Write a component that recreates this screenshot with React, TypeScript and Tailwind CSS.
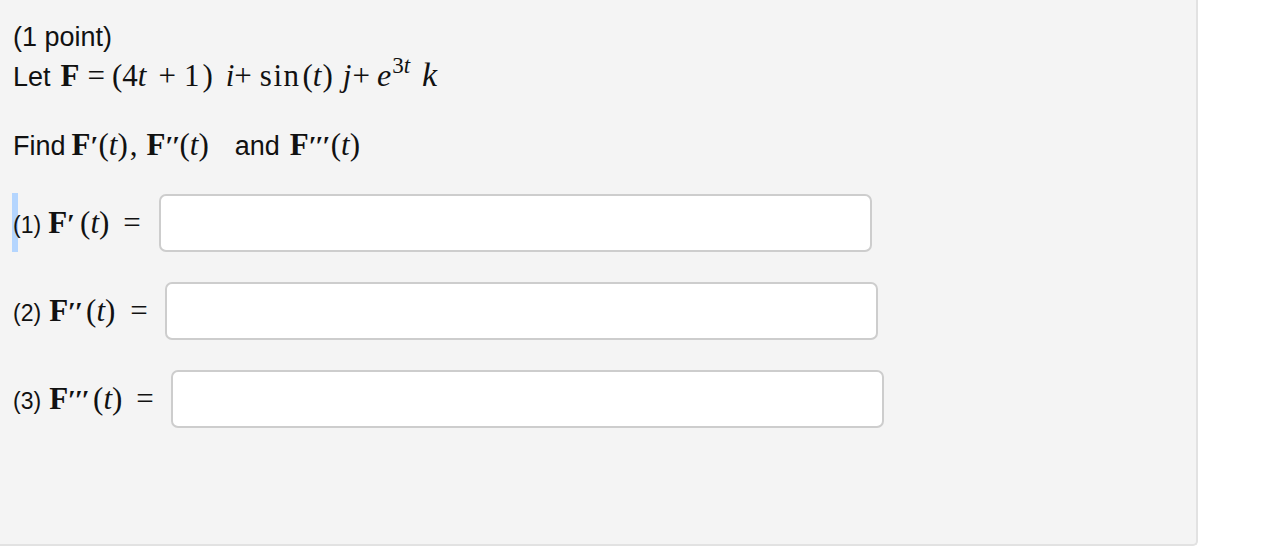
import React from "react";

const sans = "font-['Liberation_Sans',Arial,sans-serif]";
const serif = "font-['Liberation_Serif','Times_New_Roman',serif]";

// bold F with primes, then (t)
const Deriv = ({ count, pw }: { count: number; pw: string }) => (
  <span className={`${serif} text-[31px] leading-[30px]`}>
    <span className="font-bold">F</span>
    <span className={`inline-block ${pw} text-[28px] font-bold tracking-[-1px]`}>
      {"′".repeat(count)}
    </span>
    <span>(</span>
    <span className="italic">t</span>
    <span>)</span>
  </span>
);

const rows = [
  { n: "1", count: 1, pw: "w-[13px]", fm: "ml-[7px]", em: "ml-[14px]", bm: "ml-[18px]" },
  { n: "2", count: 2, pw: "w-[18px]", fm: "ml-[8px]", em: "ml-[15px]", bm: "ml-[17px]" },
  { n: "3", count: 3, pw: "w-[25px]", fm: "ml-[8px]", em: "ml-[14px]", bm: "ml-[17px]" },
];

export default function App() {
  return (
    <div className="w-[1280px] h-[552px] bg-white">
      <div className="w-[1198px] h-[546px] bg-[#f4f4f4] border-r-2 border-b-2 border-[#e2e2e2] rounded-br-[5px] pl-[13px] pt-[22px] text-[#111]">
        <div className={`${sans} text-[27px] leading-[30px]`}>(1 point)</div>
        <div className={`${sans} text-[27px] leading-[30px] mt-[8px]`}>
          <span>Let</span>
          <span className={`${serif} text-[31px] leading-[30px]`}>
            <span className="font-bold ml-[10px]">F</span>
            <span className="ml-[8px]">=</span>
            <span className="ml-[7px]">(4</span>
            <span className="italic">t</span>
            <span className="ml-[12px]">+</span>
            <span className="ml-[8px]">1</span>
            <span className="ml-[3px]">)</span>
            <span className="italic ml-[13px]">i</span>
            <span>+</span>
            <span className="ml-[8px] tracking-[1.5px]">sin</span>
            <span className="ml-[2px]">(</span>
            <span className="italic">t</span>
            <span className="ml-[1px]">)</span>
            <span className="italic ml-[10px]">j</span>
            <span className="ml-[1px]">+</span>
            <span className="italic ml-[7px] text-[32px]">e</span>
            <sup className="text-[23px] -top-[13px] ml-[1px]">
              3<span className="italic">t</span>
            </sup>
            <span className="italic ml-[12px] text-[34px]">k</span>
          </span>
        </div>
        <div className={`${sans} text-[27px] leading-[30px] mt-[38px]`}>
          <span>Find</span>
          <span className="ml-[6px]"><Deriv count={1} pw="w-[8px]" /></span>
          <span className={`${serif} text-[31px] leading-[30px] ml-[2px]`}>,</span>
          <span className="ml-[9px]"><Deriv count={2} pw="w-[14px]" /></span>
          <span className="ml-[26px]">and</span>
          <span className="ml-[10px]"><Deriv count={3} pw="w-[22px]" /></span>
        </div>
        <div className="mt-[33px] flex flex-col gap-[30px]">
          {rows.map((r) => (
            <div key={r.n} className="flex items-center h-[58px]">
              <div className={`${sans} text-[23px] leading-[30px] relative pt-[2px]`}>
                {r.n === "1" && (
                  <span className="absolute -left-[1px] top-[-13px] w-[6px] h-[59px] bg-[#b4d5fe]" />
                )}
                <span className="relative">({r.n})</span>
                <span className={`${r.fm} relative`}><Deriv count={r.count} pw={r.pw} /></span>
                <span className={`${serif} text-[31px] leading-[30px] ${r.em} relative`}>=</span>
              </div>
              <div className={`${r.bm} w-[713px] h-[58px] bg-white border-2 border-[#cdcdcd] rounded-[7px]`} />
            </div>
          ))}
        </div>
      </div>
    </div>
  );
}
